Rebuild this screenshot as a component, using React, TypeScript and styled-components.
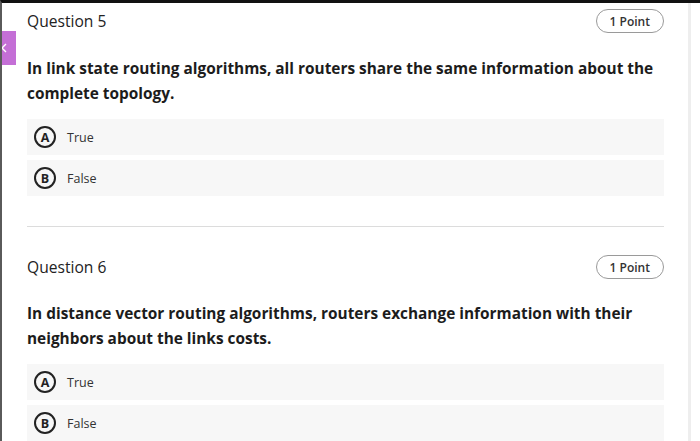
import styled, { createGlobalStyle } from 'styled-components';

const GlobalStyle = createGlobalStyle`
  html, body {
    margin: 0;
    padding: 0;
    background: #ffffff;
  }
  body {
    font-family: "Open Sans", "Noto Sans", sans-serif;
    color: #222;
  }
`;

const Page = styled.div`
  position: relative;
  width: 700px;
  height: 441px;
  overflow: hidden;
  box-sizing: border-box;
  border-top: 3px solid #111;
  border-left: 2px solid #5a5a5a;
  display: flex;
`;

const Column = styled.div`
  width: 689px;
  box-sizing: border-box;
  padding: 6px 24px 0 25px;
  border-right: 3px solid #eeeeee;
`;

const SideTab = styled.div`
  position: absolute;
  left: 0;
  top: 28px;
  width: 14px;
  height: 34px;
  background: #c46fd6;
  display: flex;
  align-items: center;
  overflow: hidden;
`;

const Header = styled.div`
  display: flex;
  align-items: center;
  justify-content: space-between;
  height: 24px;
`;

const Title = styled.div`
  font-size: 15.6px;
  color: #222;
`;

const Badge = styled.div`
  height: 24px;
  box-sizing: border-box;
  border: 1px solid #9a9a9a;
  border-radius: 12px;
  padding: 0 13px;
  display: flex;
  align-items: center;
  font-size: 12px;
  font-weight: 600;
  color: #333;
`;

const Prompt = styled.p<{ $top: number; $bottom: number }>`
  margin: ${(p) => p.$top}px 0 ${(p) => p.$bottom}px;
  font-size: 15.4px;
  font-weight: 700;
  line-height: 24.5px;
  color: #1c1c1c;
`;

const Options = styled.div`
  display: flex;
  flex-direction: column;
  gap: 5px;
`;

const Option = styled.div`
  height: 36px;
  background: #f7f7f7;
  display: flex;
  align-items: center;
  padding-left: 7px;
  gap: 11px;
`;

const Letter = styled.span`
  width: 22px;
  height: 22px;
  box-sizing: border-box;
  border: 2px solid #222;
  border-radius: 50%;
  display: flex;
  align-items: center;
  justify-content: center;
  font-size: 12.5px;
  font-weight: 700;
  color: #222;
`;

const Label = styled.span`
  font-size: 12.5px;
  color: #333;
`;

const Divider = styled.hr`
  margin: 30px 0 28px;
  border: 0;
  border-top: 1px solid #dcdcdc;
`;

type Q = { n: number; text: string; top: number; bottom: number };

const questions: Q[] = [
  {
    n: 5,
    text: 'In link state routing algorithms, all routers share the same information about the complete topology.',
    top: 24,
    bottom: 13,
  },
  {
    n: 6,
    text: 'In distance vector routing algorithms, routers exchange information with their neighbors about the links costs.',
    top: 23,
    bottom: 13,
  },
];

const Question = ({ q }: { q: Q }) => (
  <section>
    <Header>
      <Title>Question {q.n}</Title>
      <Badge>1 Point</Badge>
    </Header>
    <Prompt $top={q.top} $bottom={q.bottom}>
      {q.text}
    </Prompt>
    <Options>
      <Option>
        <Letter>A</Letter>
        <Label>True</Label>
      </Option>
      <Option>
        <Letter>B</Letter>
        <Label>False</Label>
      </Option>
    </Options>
  </section>
);

export default function App() {
  return (
    <>
      <GlobalStyle />
      <Page>
        <SideTab>
          <svg width="8" height="12" viewBox="0 0 8 12">
            <path d="M4 2 L0 6 L4 10" fill="none" stroke="#fff" strokeWidth="1.4" />
          </svg>
        </SideTab>
        <Column>
          <Question q={questions[0]} />
          <Divider />
          <Question q={questions[1]} />
        </Column>
      </Page>
    </>
  );
}
